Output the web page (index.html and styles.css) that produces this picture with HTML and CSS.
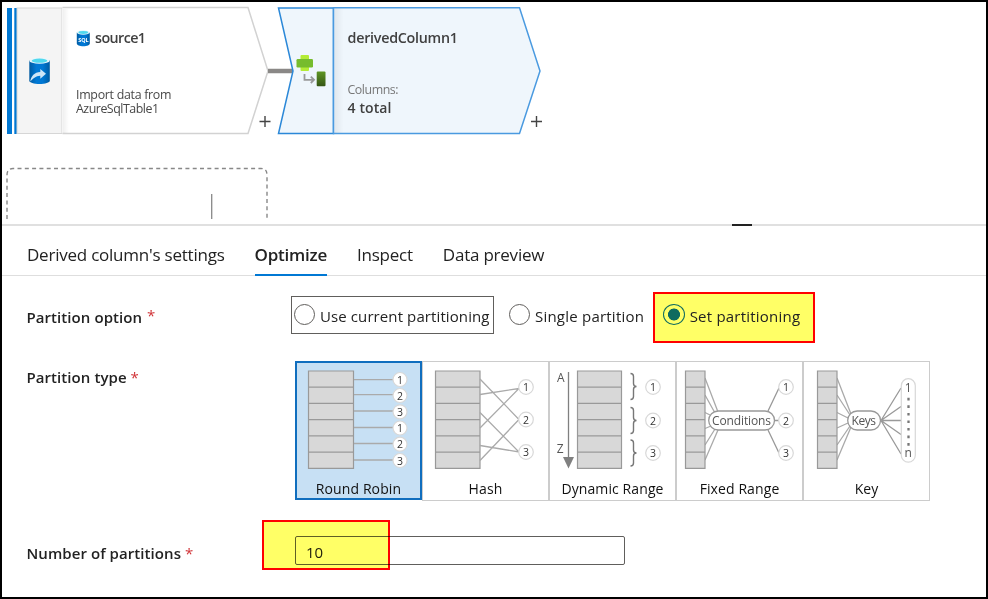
FILE: index.html
```html
<!DOCTYPE html>
<html lang="en">
<head>
  <meta charset="UTF-8">
  <meta name="viewport" content="width=device-width, initial-scale=1.0">
  <title>Data flow</title>
  <link rel="stylesheet" href="styles.css">
</head>
<body>
  <div class="window">
    <svg class="canvas" width="984" height="222" viewBox="2 2 984 222">
      <defs>
        <linearGradient id="dbBlue"><stop offset="0" stop-color="#005ba1"/><stop offset=".35" stop-color="#0078d4"/><stop offset=".65" stop-color="#0078d4"/><stop offset="1" stop-color="#005ba1"/></linearGradient>
        <linearGradient id="green" x2="0" y2="1"><stop offset="0" stop-color="#5e9624"/><stop offset="1" stop-color="#365615"/></linearGradient>
        <linearGradient id="edge"><stop offset="0" stop-color="#000" stop-opacity=".06"/><stop offset="1" stop-color="#000" stop-opacity="0"/></linearGradient>
      </defs>

      <!-- source node -->
      <rect x="7" y="8" width="11" height="126" fill="#fff"/>
      <rect x="7" y="8" width="5" height="126" fill="#0078d4"/>
      <rect x="14.3" y="8" width="2.7" height="126" fill="#0078d4"/>
      <rect x="17" y="8" width="45" height="125.5" fill="#f4f4f4" stroke="#d6d6d6"/>
      <path d="M62.5 7.5H248L268 71L248 133.5H62.5" fill="#fff" stroke="#d2d2d2" stroke-width="1.5"/>
      <rect x="63" y="9" width="6" height="124" fill="url(#edge)"/>
      <path d="M29.3 60.5V81C29.3 82.5 34 84 39.5 84S49.8 82.5 49.8 81V60.5z" fill="url(#dbBlue)"/>
      <ellipse cx="39.5" cy="60.7" rx="10.2" ry="3" fill="#e8f6fb"/>
      <ellipse cx="39.5" cy="60.7" rx="7.8" ry="2.1" fill="#50d8ee"/>
      <path d="M30.3 81.5C31 76 34.5 72.3 40.3 72V69L46 73.8L40.3 78.7V75.7C35.5 76 33 78.5 30.3 81.5z" fill="#cfe6f7"/>
      <path d="M76.8 32.5V43.5C76.8 45 79.5 46.2 83.3 46.2S89.8 45 89.8 43.5V32.5z" fill="url(#dbBlue)"/>
      <ellipse cx="83.3" cy="32.5" rx="6.5" ry="2.2" fill="#e0f4fa"/>
      <ellipse cx="83.3" cy="32.5" rx="4.8" ry="1.4" fill="#50d8ee"/>
      <text class="sql" x="78.2" y="41.5" textLength="10.5">SQL</text>
      <text class="node-title" x="95" y="43" textLength="51">source1</text>
      <text class="node-text"><tspan x="76" y="98.5" textLength="95.5">Import data from</tspan><tspan x="76" y="112.5" textLength="83">AzureSqlTable1</tspan></text>

      <!-- derived column node -->
      <path d="M268 71H293" stroke="#8a8886" stroke-width="4.5"/>
      <path d="M278.5 8H333.5V133.5H278.5L293 71z" fill="#eff6fc" stroke="#2b88d8" stroke-width="1.5"/>
      <path d="M333.5 7.7H519.5L540 71L519.5 133.5H333.5z" fill="#eff6fc" stroke="#4a9ae0" stroke-width="1.5"/>
      <rect x="334.5" y="8.5" width="9" height="124.5" fill="url(#edge)"/>
      <rect x="300.5" y="55" width="8.5" height="16" rx="1" fill="#b4ec36"/>
      <rect x="296.5" y="59" width="16.5" height="8.5" rx="1.2" fill="#76bc2d"/>
      <rect x="316.7" y="71.5" width="8.8" height="14.7" rx="1" fill="url(#green)"/>
      <path d="M304.5 74V79.8H313M310.8 76.7L314 79.8L310.8 83" fill="none" stroke="#999" stroke-width="1.8"/>
      <text class="node-title" x="347.5" y="43" textLength="110.5">derivedColumn1</text>
      <text class="node-text light" x="347.5" y="94" textLength="51">Columns:</text>
      <text class="node-count" x="347.5" y="113" textLength="44">4 total</text>

      <!-- add buttons -->
      <path d="M259.5 121.5H270.5M265 116V127M531 121.5H542M536.5 116V127" stroke="#444" stroke-width="1.4"/>

      <!-- add source placeholder -->
      <path d="M7 219V175Q7 168.5 13 168.5H261Q267 168.5 267 175V219" fill="none" stroke="#888" stroke-width="1.4" stroke-dasharray="4 3.3"/>
      <path d="M211.7 194V219" stroke="#888" stroke-width="1.3"/>
    </svg>

    <div class="splitter"><span class="handle"></span></div>

    <div class="tabs">
      <div class="tab">Derived column's settings</div>
      <div class="tab active">Optimize</div>
      <div class="tab">Inspect</div>
      <div class="tab">Data preview</div>
    </div>

    <form class="settings">
      <div class="row option-row">
        <div class="label">Partition option <span class="required raised">*</span></div>
        <div class="radios">
          <label class="radio focused"><span class="circle"></span><span>Use current partitioning</span></label>
          <label class="radio"><span class="circle"></span><span>Single partition</span></label>
          <label class="radio marked"><span class="circle checked"></span><span>Set partitioning</span></label>
        </div>
      </div>

      <div class="row type-row">
        <div class="label">Partition type <span class="required">*</span></div>
        <div class="cards">
          <div class="card selected">
            <svg width="125" height="117" viewBox="0 0 125 117">
              <path class="blocks" d="M12.5 9H57.5V106.3H12.5zM12.5 25.2H57.5M12.5 41.4H57.5M12.5 57.6H57.5M12.5 73.9H57.5M12.5 90.1H57.5"/>
              <path class="wire" d="M58 17.7H97M58 32.7H97M58 49H97M58 65.5H97M58 81.5H97M58 98H97"/>
              <g class="dot"><circle cx="104" cy="17.5" r="7"/><circle cx="104" cy="33.5" r="7"/><circle cx="104" cy="49.8" r="7"/><circle cx="104" cy="66" r="7"/><circle cx="104" cy="82.2" r="7"/><circle cx="104" cy="98.5" r="7"/></g>
              <g class="num"><text x="104" y="21.5">1</text><text x="104" y="37.5">2</text><text x="104" y="53.8">3</text><text x="104" y="70">1</text><text x="104" y="86.2">2</text><text x="104" y="102.5">3</text></g>
            </svg>
            <span>Round Robin</span>
          </div>
          <div class="card">
            <svg width="125" height="117" viewBox="0 0 125 117">
              <path class="blocks" d="M12.5 9H57V106.3H12.5zM12.5 25.2H57M12.5 41.4H57M12.5 57.6H57M12.5 73.9H57M12.5 90.1H57"/>
              <path class="wire" d="M57 17L96 57.5L57 98.5M57 32.5L96 26.5L57 66M57 50.5L96 90L57 83.5"/>
              <g class="dot"><circle cx="103" cy="25" r="7.3"/><circle cx="103" cy="57.5" r="7.3"/><circle cx="103" cy="90" r="7.3"/></g>
              <g class="num"><text x="103" y="29">1</text><text x="103" y="61.5">2</text><text x="103" y="94">3</text></g>
            </svg>
            <span>Hash</span>
          </div>
          <div class="card">
            <svg width="125" height="117" viewBox="0 0 125 117">
              <g class="word"><text x="10.7" y="20">A</text><text x="10.3" y="91">Z</text></g>
              <path d="M18.5 10V96" stroke="#808080" stroke-width="1.3"/>
              <path d="M13 95H24L18.5 106.5z" fill="#808080"/>
              <path class="blocks" d="M27.5 9H71.5V106.3H27.5zM27.5 25.2H71.5M27.5 41.4H71.5M27.5 57.6H71.5M27.5 73.9H71.5M27.5 90.1H71.5"/>
              <path class="brace" d="M80.5 11.5Q83.5 11.5 83.5 14.5V21.5Q83.5 24.5 86.5 24.5Q83.5 24.5 83.5 27.5V34.5Q83.5 37.5 80.5 37.5"/>
              <path class="brace" d="M80.5 45.5Q83.5 45.5 83.5 48.5V55.5Q83.5 58.5 86.5 58.5Q83.5 58.5 83.5 61.5V68.5Q83.5 71.5 80.5 71.5"/>
              <path class="brace" d="M80.5 78Q83.5 78 83.5 81V88Q83.5 91 86.5 91Q83.5 91 83.5 94V101Q83.5 104 80.5 104"/>
              <g class="dot"><circle cx="103" cy="25" r="7.3"/><circle cx="103" cy="58.5" r="7.3"/><circle cx="103" cy="91" r="7.3"/></g>
              <g class="num"><text x="103" y="29">1</text><text x="103" y="62.5">2</text><text x="103" y="95">3</text></g>
            </svg>
            <span>Dynamic Range</span>
          </div>
          <div class="card">
            <svg width="125" height="117" viewBox="0 0 125 117">
              <path class="wire" d="M28 16L41 50M28 33L38 51M28 50.5L33 53M28 66.5L34 64M28 83L38 67M28 98L41 68"/>
              <path class="wire dark" d="M91 49L102 26M97 58.5H102M91 68L102 91"/>
              <path class="blocks" d="M8.5 9H28V106.3H8.5zM8.5 25.2H28M8.5 41.4H28M8.5 57.6H28M8.5 73.9H28M8.5 90.1H28"/>
              <rect class="pill" x="31.7" y="49" width="65.8" height="19" rx="9.5"/>
              <g class="word"><text x="64.5" y="62.5" textLength="59">Conditions</text></g>
              <g class="dot"><circle cx="109" cy="25" r="7.3"/><circle cx="109" cy="58.5" r="7.3"/><circle cx="109" cy="91" r="7.3"/></g>
              <g class="num"><text x="109" y="29">1</text><text x="109" y="62.5">2</text><text x="109" y="95">3</text></g>
            </svg>
            <span>Fixed Range</span>
          </div>
          <div class="card">
            <svg width="125" height="117" viewBox="0 0 125 117">
              <path class="wire" d="M33 16L47 52M33 33L46 53M33 50.5L44 56M33 66L44 61M33 83L46 64M33 98L47 65"/>
              <path class="wire dark" d="M77 58.5L97 26M77 58.5L97 44.5M77 58.5H97M77 58.5L97 72.5M77 58.5L97 92"/>
              <path class="blocks" d="M13.5 9H33V106.3H13.5zM13.5 25.2H33M13.5 41.4H33M13.5 57.6H33M13.5 73.9H33M13.5 90.1H33"/>
              <rect class="pill" x="43.7" y="49" width="32.8" height="19" rx="9.5"/>
              <g class="dot"><rect x="97.3" y="16.7" width="14" height="83.5" rx="7"/></g>
              <g class="word"><text x="59.8" y="62.5" textLength="24.5">Keys</text><text x="104.3" y="29.5">1</text><text x="104.3" y="95">n</text></g>
              <path d="M104.5 35.8V84" stroke="#777" stroke-width="2.3" stroke-dasharray="2.6 4.95"/>
            </svg>
            <span>Key</span>
          </div>
        </div>
      </div>

      <div class="row count-row">
        <div class="label">Number of partitions <span class="required">*</span></div>
        <div class="field">
          <input class="count" type="text" value="10">
          <div class="highlight"></div>
        </div>
      </div>
    </form>
  </div>
</body>
</html>
```
FILE: styles.css
```css
* {
  box-sizing: border-box;
}
body {
  margin: 0;
  font-family: "Open Sans", "Noto Sans", sans-serif;
  color: #222;
}
.window {
  width: 988px;
  height: 599px;
  border: 2px solid #000;
  background: #fff;
  overflow: hidden;
}

/* graph */
.canvas {
  display: block;
}
.node-title, .node-count {
  font-size: 14.3px;
  font-weight: 600;
  fill: #404040;
}
.node-count {
  font-size: 14px;
}
.node-text {
  font-size: 12.4px;
  fill: #484848;
}
.node-text.light {
  fill: #777;
}
.sql {
  font-size: 5.5px;
  font-weight: 700;
  fill: #fff;
}
.splitter {
  display: flex;
  height: 2px;
  padding-left: 730px;
  background: #e0e0e0;
}
.handle {
  width: 20px;
  background: #222;
}

/* tabs */
.tabs {
  display: flex;
  gap: 30px;
  height: 50px;
  padding-left: 25px;
  border-bottom: 1px solid #dedede;
}
.tab {
  height: 50px;
  line-height: 57px;
  font-size: 17px;
  letter-spacing: -0.23px;
  white-space: nowrap;
}
.tab.active {
  font-weight: 600;
  border-bottom: 2px solid #0078d4;
}

/* settings */
.settings {
  padding-left: 24.5px;
}
.row {
  display: flex;
  align-items: flex-start;
}
.label {
  width: 268.5px;
  flex: none;
  font-size: 15px;
  font-weight: 600;
  letter-spacing: 0.07px;
  line-height: 20px;
}
.required {
  color: #d13438;
  font-weight: 400;
}
.raised {
  position: relative;
  top: -2px;
  left: 1px;
}
.option-row {
  height: 85px;
  padding-top: 16px;
}
.option-row .label {
  width: 264.5px;
  padding-top: 15px;
}
.radios {
  display: flex;
  align-items: flex-start;
}
.radio {
  display: flex;
  align-items: center;
  height: 38px;
  margin-top: 4px;
  padding-bottom: 2px;
  font-size: 15px;
  letter-spacing: 0.22px;
  white-space: nowrap;
}
.radio > span:last-child {
  padding-top: 3px;
}
.radio.focused {
  width: 203px;
  border: 1px solid #605e5c;
  padding-left: 2px;
  margin-right: 15px;
  letter-spacing: 0.1px;
}
.circle {
  width: 21px;
  height: 21px;
  flex: none;
  margin-right: 5px;
  border: 1px solid #605e5c;
  border-radius: 50%;
  background: #fff;
}
.circle.checked {
  width: 22px;
  border-color: #0f6b5f;
  background: radial-gradient(circle, #0f6b5f 5.7px, transparent 6.3px);
}
.radio.marked {
  width: 162px;
  height: 51px;
  margin-top: 0;
  margin-left: 8.5px;
  padding: 0 0 6px 8px;
  border: 2px solid #f00;
  background: #ff6;
}

.type-row {
  height: 159px;
}
.type-row .label {
  padding-top: 6px;
}
.cards {
  display: flex;
}
.card {
  width: 127px;
  height: 140px;
  border: 1px solid #ccc;
  text-align: center;
  font-size: 14px;
  letter-spacing: 0.1px;
  line-height: 20px;
  color: #111;
}
.card svg {
  display: block;
  letter-spacing: 0;
}
.card.selected {
  height: 139px;
  background: #c7e0f4;
  border-color: #106ebe;
  box-shadow: inset 0 0 0 1px #106ebe;
}
.blocks {
  fill: #d8d8d8;
  stroke: #999;
  stroke-width: 1.2;
}
.wire {
  fill: none;
  stroke: #aaa;
  stroke-width: 1.3;
}
.wire.dark {
  stroke: #999;
}
.brace {
  fill: none;
  stroke: #777;
  stroke-width: 1.4;
}
.dot {
  fill: #fff;
  stroke: #d8d8d8;
  stroke-width: 1.2;
}
.pill {
  fill: #fff;
  stroke: #999;
  stroke-width: 1.3;
}
.num {
  font-size: 10.5px;
  fill: #333;
  text-anchor: middle;
}
.word {
  font-size: 12px;
  fill: #555;
  text-anchor: middle;
}

.count-row .label {
  padding-top: 23px;
}
.field {
  position: relative;
  padding-top: 16px;
}
.count {
  display: block;
  width: 330px;
  height: 29px;
  padding: 3px 10px 0;
  border: 1px solid #605e5c;
  border-radius: 2px;
  font-family: inherit;
  font-size: 15px;
  color: #222;
}
.highlight {
  position: absolute;
  left: -33px;
  top: 0;
  width: 128px;
  height: 50px;
  background: #ff6;
  border: 2px solid #f00;
  mix-blend-mode: multiply;
}
```
